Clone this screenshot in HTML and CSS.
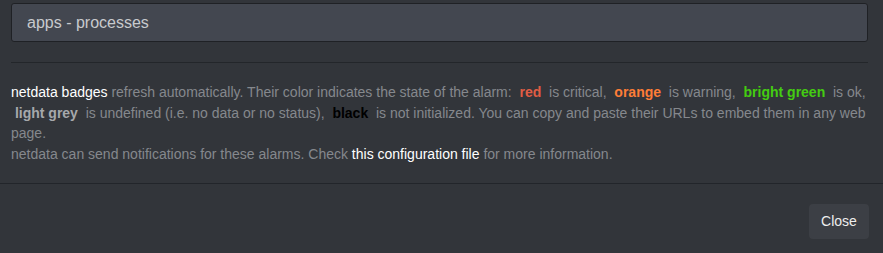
FILE: index.html
```html
<!DOCTYPE html>
<html>
<head>
<meta charset="utf-8">
<link rel="stylesheet" href="styles.css">
</head>
<body>
<div class="modal">
  <div class="modal-body">
    <div class="title-box">apps - processes</div>
    <hr class="sep">
    <p class="info"><span class="hl">netdata badges</span> refresh automatically. Their color indicates the state of the alarm: <b class="c-red">&nbsp;red&nbsp;</b> is critical, <b class="c-orange">&nbsp;orange&nbsp;</b> is warning, <b class="c-green">&nbsp;bright green&nbsp;</b> is ok, <b class="c-grey">&nbsp;light grey&nbsp;</b> is undefined (i.e. no data or no status), <b class="c-black">&nbsp;black&nbsp;</b> is not initialized. You can copy and paste their URLs to embed them in any web page.<br>netdata can send notifications for these alarms. Check <a class="hl link">this configuration file</a> for more information.</p>
  </div>
  <div class="modal-footer">
    <button class="btn">Close</button>
  </div>
</div>
</body>
</html>
```
FILE: styles.css
```css
html, body {
  margin: 0;
  padding: 0;
  background: #32353a;
  font-family: "Liberation Sans", Arial, sans-serif;
  font-size: 14px;
}
.modal {
  width: 883px;
  height: 253px;
}
.modal-body {
  padding: 3px 15px 0 11px;
}
.title-box {
  box-sizing: border-box;
  height: 39px;
  background: #434750;
  border: 1px solid #1f2125;
  border-radius: 3px;
  padding: 0 15px;
  line-height: 37px;
  font-size: 16px;
  color: #c8cacd;
}
.sep {
  margin: 20px 0 0 0;
  border: 0;
  border-top: 1px solid #23262a;
  height: 0;
}
.info {
  margin: 19px 0 0 0;
  line-height: 20.7px;
  color: #85888d;
}
.hl {
  color: #ffffff;
}
.link {
  text-decoration: none;
}
.c-red { color: #e05d44; }
.c-orange { color: #fe7d37; }
.c-green { color: #4c1; }
.c-grey { color: #a6a8ab; }
.c-black { color: #000000; }
.modal-footer {
  margin-top: 18px;
  border-top: 1px solid #22252a;
  padding: 20px 14px 0 0;
  display: flex;
  justify-content: flex-end;
}
.btn {
  width: 60px;
  height: 35px;
  border: 0;
  border-radius: 4px;
  background: #3c3f45;
  color: #eeeeee;
  font-family: "Liberation Sans", Arial, sans-serif;
  font-size: 14px;
  padding: 0;
}
```
